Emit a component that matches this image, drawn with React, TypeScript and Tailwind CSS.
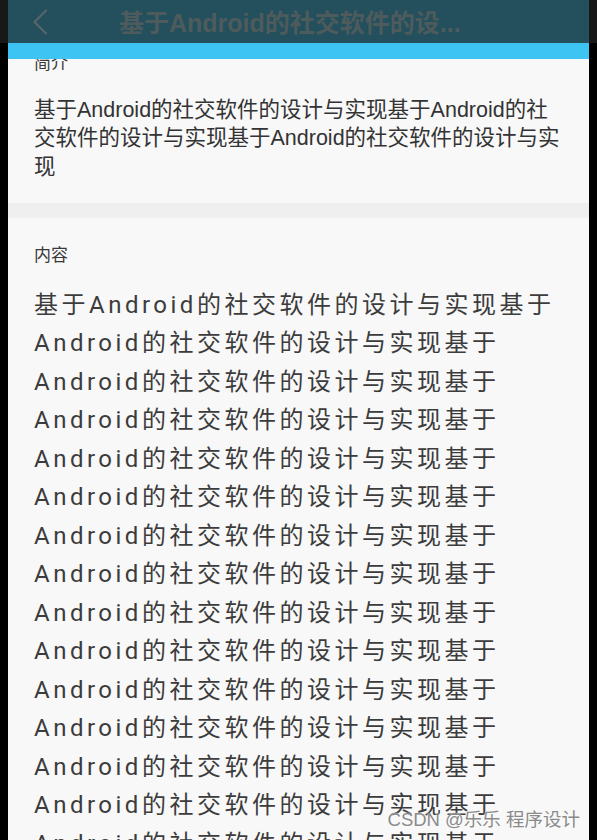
const intro =
  ['基于Android的社交软件的设计与实现基于Android的社', '交软件的设计与实现基于Android的社交软件的设计与实', '现'];

const contentLines = [
  '基于Android的社交软件的设计与实现基于',
  ...Array.from({ length: 13 }, () => 'Android的社交软件的设计与实现基于'),
  'Android的社交软件的设计与实现基于',
  'Android的社交软件的设计与实现基于',
];

export default function App() {
  return (
    <div className="relative min-h-[840px] overflow-hidden bg-black font-['Liberation_Sans','Noto_Sans_CJK_SC',sans-serif]">
      {/* Top bar */}
      <header className="flex h-[43px] bg-[#181818]">
        <div className="ml-[8px] flex h-full w-[581px] items-center bg-[#24505e]">
          <svg className="ml-[24px]" width="16" height="26" viewBox="0 0 16 26" fill="none">
            <polyline points="14,1.5 2.5,13 14,24.5" stroke="#55666a" strokeWidth="2.2" strokeLinecap="round" strokeLinejoin="round" />
          </svg>
          <h1 className="ml-[71px] mt-[3px] whitespace-nowrap text-[25px] font-bold leading-none text-[#4e5b5c]">
            基于Android的社交软件的设...
          </h1>
        </div>
      </header>

      <div className="ml-[8px] w-[581px] bg-[#f8f8f8]">
        <div className="relative z-10 h-[16px] bg-[#3ec4f2]" />

        {/* Intro */}
        <section className="-mt-[7.5px] pb-[21.75px] pl-[26px]">
          <div className="text-[17px] leading-[24px] text-[#3a3a3a]">简介</div>
          <p className="mt-[20px] text-[21.5px] leading-[28.5px] text-[#333333]">
            {intro.map((line, i) => (
              <span key={i} className="block whitespace-nowrap">
                {line}
              </span>
            ))}
          </p>
        </section>

        <div className="h-[15px] bg-[#efefef]" />

        {/* Content */}
        <section className="pl-[26px] pt-[26px]">
          <div className="text-[17px] leading-[24px] text-[#3a3a3a]">内容</div>
          <div className="mt-[17.75px] font-['Roboto','Noto_Sans_CJK_SC',sans-serif] text-[24px] leading-[38.5px] tracking-[3.5px] text-[#3c3c3c]">
            {contentLines.map((line, i) => (
              <div key={i} className="whitespace-nowrap">
                {line}
              </div>
            ))}
          </div>
        </section>
      </div>

      {/* Watermark */}
      <div className="absolute right-[17px] top-[808px] whitespace-nowrap text-[18.5px] leading-[24px] text-[#8a8a8a] [text-shadow:0_0_2px_rgba(255,255,255,0.9)]">
        CSDN @乐乐 程序设计
      </div>
    </div>
  );
}
